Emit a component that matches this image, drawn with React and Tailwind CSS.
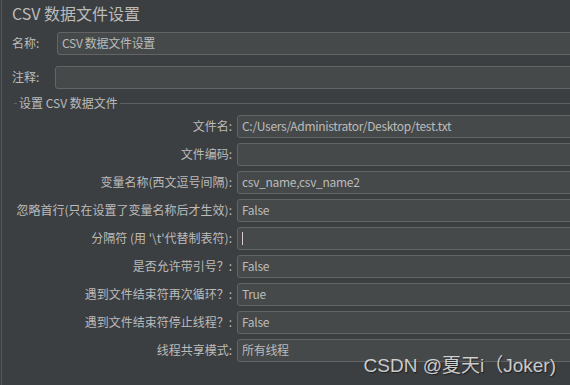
const rows = [
  { label: '文件名:', value: 'C:/Users/Administrator/Desktop/test.txt' },
  { label: '文件编码:', value: '' },
  { label: '变量名称(西文逗号间隔):', value: 'csv_name,csv_name2' },
  { label: '忽略首行(只在设置了变量名称后才生效):', value: 'False' },
  { label: "分隔符 (用 '\\t'代替制表符):", value: '', caret: true },
  { label: '是否允许带引号？:', value: 'False' },
  { label: '遇到文件结束符再次循环？:', value: 'True' },
  { label: '遇到文件结束符停止线程？:', value: 'False' },
  { label: '线程共享模式:', value: '所有线程' },
]

const font = { fontFamily: '"Noto Sans CJK SC", "Noto Sans", sans-serif' }

function Field({ children, className = '' }) {
  return (
    <div className={`flex h-[23px] flex-1 items-center rounded-[3px] border border-[#646464] bg-[#45494a] pl-[4px] pb-px -mr-[10px] text-[12px] leading-[16px] tracking-[-0.3px] text-[#bbbbbb] ${className}`}>
      {children}
    </div>
  )
}

export default function App() {
  return (
    <div className="relative h-[385px] w-[570px] overflow-hidden bg-[#3c3f41] pl-px" style={font}>
      <div className="flex h-full flex-col border-l border-[#56595b]">
        <div className="flex h-[27px] items-center pl-[10px] pb-px text-[16px] leading-[20px] text-[#bbbbbb]">CSV 数据文件设置</div>

        <div className="mt-[5px] flex items-center text-[12px] leading-[16px] text-[#bbbbbb]">
          <span className="w-[55px] pl-[10px] pb-px">名称:</span>
          <Field>CSV 数据文件设置</Field>
        </div>

        <div className="mt-[11px] flex items-center text-[12px] leading-[16px] text-[#bbbbbb]">
          <span className="w-[53px] pl-[10px] pb-px">注释:</span>
          <Field className="h-[22px]" />
        </div>

        <div className="mt-[6px] flex items-center">
          <div className="h-px w-[3px] ml-[12px] bg-[#5e6162]" />
          <span className="px-[2px] text-[12px] leading-[16px] text-[#bbbbbb]">设置 CSV 数据文件</span>
          <div className="h-px flex-1 bg-[#5e6162]" />
        </div>

        <div className="mt-[4px] flex flex-col gap-[5px]">
          {rows.map((r) => (
            <div key={r.label} className="flex items-center">
              <span className="w-[231px] whitespace-nowrap pr-[1px] pb-px text-right text-[12px] leading-[16px] text-[#bbbbbb]">{r.label}</span>
              <div className="w-[4px]" />
              <Field>
                {r.caret ? <span className="h-[13px] w-px bg-[#d9c8cf]" /> : r.value}
              </Field>
            </div>
          ))}
        </div>
      </div>

      <div
        className="absolute bottom-[8px] right-[14px] text-[19px] leading-[22px] text-white/75"
        style={{ fontFamily: '"Liberation Sans", "Noto Sans CJK SC", sans-serif', textShadow: '1px 1px 1px rgba(0,0,0,0.5)' }}
      >
        CSDN @夏天i（Joker)
      </div>
    </div>
  )
}
